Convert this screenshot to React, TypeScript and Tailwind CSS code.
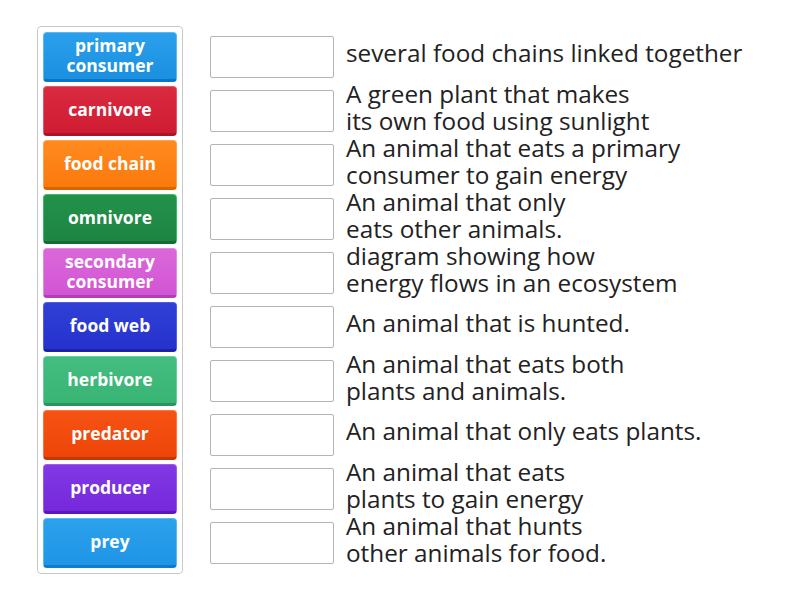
import React from 'react'

type Tile = { label: string; cls: string }

const tiles: Tile[] = [
  { label: 'primary consumer', cls: 'bg-gradient-to-b from-[#2aa0ec] to-[#1b8fe0] border-[#5ab8f3] border-b-[#0c74c4]' },
  { label: 'carnivore', cls: 'bg-gradient-to-b from-[#da2a40] to-[#cf1c32] border-[#e45a68] border-b-[#a8162a]' },
  { label: 'food chain', cls: 'bg-gradient-to-b from-[#ff8a1e] to-[#fb7a0c] border-[#ffa24e] border-b-[#d86500]' },
  { label: 'omnivore', cls: 'bg-gradient-to-b from-[#23914a] to-[#1d8542] border-[#34c064] border-b-[#166a33]' },
  { label: 'secondary consumer', cls: 'bg-gradient-to-b from-[#da68da] to-[#d255d4] border-[#e48ae4] border-b-[#b33db5]' },
  { label: 'food web', cls: 'bg-gradient-to-b from-[#3040d6] to-[#2532cc] border-[#5060e2] border-b-[#1a23a4]' },
  { label: 'herbivore', cls: 'bg-gradient-to-b from-[#44be80] to-[#38b474] border-[#66d09a] border-b-[#2a955e]' },
  { label: 'predator', cls: 'bg-gradient-to-b from-[#f65214] to-[#ee4508] border-[#ff7438] border-b-[#c33804]' },
  { label: 'producer', cls: 'bg-gradient-to-b from-[#8238e4] to-[#7528dc] border-[#9a5cef] border-b-[#5c17bc]' },
  { label: 'prey', cls: 'bg-gradient-to-b from-[#2ca2ec] to-[#1e95e6] border-[#5ab9f3] border-b-[#0c7dcc]' },
]

const descriptions: string[][] = [
  ['several food chains linked together'],
  ['A green plant that makes', 'its own food using sunlight'],
  ['An animal that eats a primary', 'consumer to gain energy'],
  ['An animal that only', 'eats other animals.'],
  ['diagram showing how', 'energy flows in an ecosystem'],
  ['An animal that is hunted.'],
  ['An animal that eats both', 'plants and animals.'],
  ['An animal that only eats plants.'],
  ['An animal that eats', 'plants to gain energy'],
  ['An animal that hunts', 'other animals for food.'],
]

export default function App() {
  return (
    <div className="w-[800px] h-[600px] bg-white font-['Open_Sans',sans-serif] flex items-start pt-[26px] pl-[37px]">
      {/* tile column */}
      <div className="w-[146px] border border-[#c8c8c8] rounded-[4px] p-[5px] flex flex-col gap-[4px]">
        {tiles.map(t => (
          <div
            key={t.label}
            className={`h-[50px] rounded-[4px] border border-b-[3px] pb-[2px] flex items-center justify-center text-center text-white font-bold text-[17.5px] leading-[20px] ${t.cls}`}
          >
            {t.label}
          </div>
        ))}
      </div>

      {/* answer rows */}
      <div className="ml-[27px] pt-[6px] flex flex-col gap-[4px]">
        {descriptions.map((lines, i) => (
          <div key={i} className="h-[50px] flex items-center">
            <div className="w-[124px] h-[42px] border border-[#b4b4b4] rounded-[2px] bg-white shrink-0" />
            <div className="ml-[12px] -mt-[9px] text-[24.3px] leading-[27px] text-[#222] whitespace-nowrap">
              {lines.map((l, j) => (
                <div key={j}>{l}</div>
              ))}
            </div>
          </div>
        ))}
      </div>
    </div>
  )
}
